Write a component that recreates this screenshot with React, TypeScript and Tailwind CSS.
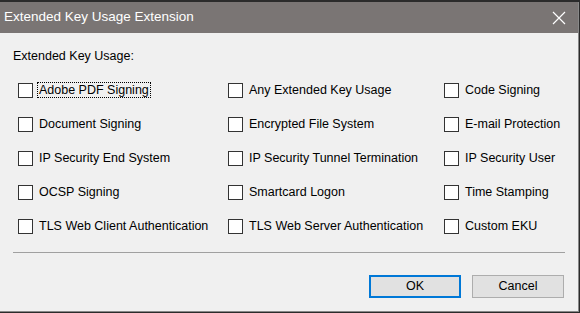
import React from "react";

const rows: string[][] = [
  ["Adobe PDF Signing", "Any Extended Key Usage", "Code Signing"],
  ["Document Signing", "Encrypted File System", "E-mail Protection"],
  ["IP Security End System", "IP Security Tunnel Termination", "IP Security User"],
  ["OCSP Signing", "Smartcard Logon", "Time Stamping"],
  ["TLS Web Client Authentication", "TLS Web Server Authentication", "Custom EKU"],
];

function Check({ label, focused }: { label: string; focused?: boolean }) {
  return (
    <label className="flex items-center h-[16px]">
      <span className="w-[15px] h-[15px] border border-[#333333] bg-white shrink-0" />
      <span
        className={
          "ml-[5px] leading-[14px] px-px " +
          (focused ? "outline-1 outline-dotted outline-black" : "")
        }
      >
        {label}
      </span>
    </label>
  );
}

export default function App() {
  return (
    <div className="w-[580px] h-[313px] bg-[#2b2b2b] pt-[2px] overflow-hidden">
      <div
        className="w-[579px] h-[310px] flex flex-col bg-[#f0f0f0] border-r border-b border-[#888888]"
        style={{ fontFamily: '"Liberation Sans", Arial, sans-serif' }}
      >
        {/* Title bar */}
        <div className="h-[31px] bg-[#7a7574] flex items-center justify-between pl-[4px] pr-[12px]">
          <span className="text-white text-[13.5px]">Extended Key Usage Extension</span>
          <svg width="14" height="14" viewBox="0 0 14 14" className="text-white">
            <path d="M1 1 L13 13 M13 1 L1 13" stroke="currentColor" strokeWidth="1.2" />
          </svg>
        </div>

        <div className="flex-1 text-[12.5px] text-black px-[13px]">
          <div className="pt-[16px] leading-[14px]">Extended Key Usage:</div>

          <div className="mt-[19px] pl-[5px] flex flex-col gap-[18px]">
            {rows.map((r, i) => (
              <div key={i} className="flex">
                <div className="w-[210px]">
                  <Check label={r[0]} focused={i === 0} />
                </div>
                <div className="w-[216px]">
                  <Check label={r[1]} />
                </div>
                <div>
                  <Check label={r[2]} />
                </div>
              </div>
            ))}
          </div>

          <hr className="mt-[18px] border-t border-[#a0a0a0]" />

          <div className="flex justify-end gap-[11px] mt-[22px] pr-[1px]">
            <button className="w-[92px] h-[23px] bg-[#e1e1e1] border-2 border-[#0078d7] text-[12.5px]">
              OK
            </button>
            <button className="w-[92px] h-[23px] bg-[#e1e1e1] border border-[#adadad] text-[12.5px]">
              Cancel
            </button>
          </div>
        </div>
      </div>
    </div>
  );
}
